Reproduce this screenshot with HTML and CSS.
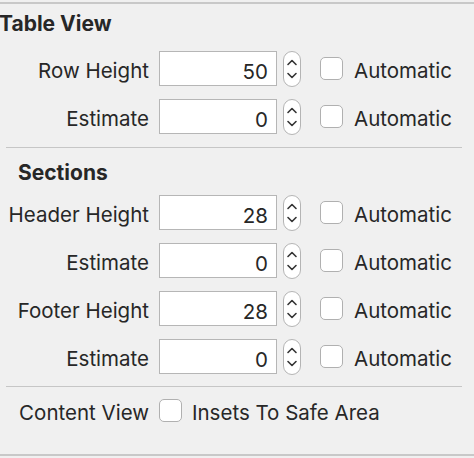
FILE: index.html
```html
<!DOCTYPE html>
<html>
<head>
<meta charset="utf-8">
<link rel="stylesheet" href="styles.css">
</head>
<body>
<div class="panel">
  <div class="title first">Table View</div>
  <div class="grid g1">
    <div class="label">Row Height</div>
    <div class="field">50</div>
    <div class="stepper"><svg width="18" height="36" viewBox="0 0 18 36"><rect x="0.5" y="0.5" width="17" height="35" rx="8.5" fill="#fff" stroke="#b4b4b4"/><path d="M5 13.5 L9 9.5 L13 13.5" fill="none" stroke="#333" stroke-width="1.6" stroke-linecap="round" stroke-linejoin="round"/><path d="M5 22.5 L9 26.5 L13 22.5" fill="none" stroke="#333" stroke-width="1.6" stroke-linecap="round" stroke-linejoin="round"/></svg></div>
    <div class="check"></div>
    <div class="ctext">Automatic</div>

    <div class="label">Estimate</div>
    <div class="field">0</div>
    <div class="stepper"><svg width="18" height="36" viewBox="0 0 18 36"><rect x="0.5" y="0.5" width="17" height="35" rx="8.5" fill="#fff" stroke="#b4b4b4"/><path d="M5 13.5 L9 9.5 L13 13.5" fill="none" stroke="#333" stroke-width="1.6" stroke-linecap="round" stroke-linejoin="round"/><path d="M5 22.5 L9 26.5 L13 22.5" fill="none" stroke="#333" stroke-width="1.6" stroke-linecap="round" stroke-linejoin="round"/></svg></div>
    <div class="check"></div>
    <div class="ctext">Automatic</div>
  </div>
  <div class="sep sep1"></div>
  <div class="title second">Sections</div>
  <div class="grid g2">
    <div class="label">Header Height</div>
    <div class="field">28</div>
    <div class="stepper"><svg width="18" height="36" viewBox="0 0 18 36"><rect x="0.5" y="0.5" width="17" height="35" rx="8.5" fill="#fff" stroke="#b4b4b4"/><path d="M5 13.5 L9 9.5 L13 13.5" fill="none" stroke="#333" stroke-width="1.6" stroke-linecap="round" stroke-linejoin="round"/><path d="M5 22.5 L9 26.5 L13 22.5" fill="none" stroke="#333" stroke-width="1.6" stroke-linecap="round" stroke-linejoin="round"/></svg></div>
    <div class="check"></div>
    <div class="ctext">Automatic</div>

    <div class="label">Estimate</div>
    <div class="field">0</div>
    <div class="stepper"><svg width="18" height="36" viewBox="0 0 18 36"><rect x="0.5" y="0.5" width="17" height="35" rx="8.5" fill="#fff" stroke="#b4b4b4"/><path d="M5 13.5 L9 9.5 L13 13.5" fill="none" stroke="#333" stroke-width="1.6" stroke-linecap="round" stroke-linejoin="round"/><path d="M5 22.5 L9 26.5 L13 22.5" fill="none" stroke="#333" stroke-width="1.6" stroke-linecap="round" stroke-linejoin="round"/></svg></div>
    <div class="check"></div>
    <div class="ctext">Automatic</div>

    <div class="label">Footer Height</div>
    <div class="field">28</div>
    <div class="stepper"><svg width="18" height="36" viewBox="0 0 18 36"><rect x="0.5" y="0.5" width="17" height="35" rx="8.5" fill="#fff" stroke="#b4b4b4"/><path d="M5 13.5 L9 9.5 L13 13.5" fill="none" stroke="#333" stroke-width="1.6" stroke-linecap="round" stroke-linejoin="round"/><path d="M5 22.5 L9 26.5 L13 22.5" fill="none" stroke="#333" stroke-width="1.6" stroke-linecap="round" stroke-linejoin="round"/></svg></div>
    <div class="check"></div>
    <div class="ctext">Automatic</div>

    <div class="label">Estimate</div>
    <div class="field">0</div>
    <div class="stepper"><svg width="18" height="36" viewBox="0 0 18 36"><rect x="0.5" y="0.5" width="17" height="35" rx="8.5" fill="#fff" stroke="#b4b4b4"/><path d="M5 13.5 L9 9.5 L13 13.5" fill="none" stroke="#333" stroke-width="1.6" stroke-linecap="round" stroke-linejoin="round"/><path d="M5 22.5 L9 26.5 L13 22.5" fill="none" stroke="#333" stroke-width="1.6" stroke-linecap="round" stroke-linejoin="round"/></svg></div>
    <div class="check"></div>
    <div class="ctext">Automatic</div>
  </div>
  <div class="sep sep2"></div>
  <div class="content-row">
    <div class="label">Content View</div>
    <div class="check"></div>
    <div class="ctext">Insets To Safe Area</div>
  </div>
</div>
</body>
</html>
```

FILE: styles.css
```css
html, body {
  margin: 0;
  padding: 0;
  background: #f0f0f0;
}
body {
  font-family: Inter, "Liberation Sans", Arial, sans-serif;
  font-size: 20.5px;
  color: #272727;
  width: 474px;
  height: 458px;
  overflow: hidden;
}
.panel {
  margin-top: 2px;
  border-top: 2px solid #c8c8c8;
  border-bottom: 2px solid #c8c8c8;
  height: 454px;
  box-sizing: border-box;
}
.title {
  font-weight: bold;
  height: 25px;
  line-height: 25px;
  font-size: 21px;
}
.title.first {
  margin-top: 7px;
  padding-left: 0;
  margin-left: -1px;
}
.title.second {
  margin-top: 12px;
  padding-left: 18px;
}
.grid {
  display: grid;
  grid-template-columns: 149px 118px 18px 23px auto;
  grid-auto-rows: 35px;
  row-gap: 13px;
  align-items: center;
}
.g1 { margin-top: 15px; }
.g2 { margin-top: 10px; }
.label {
  text-align: right;
  white-space: nowrap;
  line-height: 25px;
  padding-top: 4px;
}
.grid .field { margin-left: 10px; }
.field {
  height: 35px;
  box-sizing: border-box;
  background: #fff;
  border: 1px solid #b6b6b6;
  text-align: right;
  padding-right: 8px;
  line-height: 33px;
  padding-top: 3px;
  width: 118px;
}
.grid .stepper {
  margin-left: 16px;
  height: 36px;
}
.stepper svg { display: block; }
.check {
  width: 23px;
  height: 23px;
  box-sizing: border-box;
  background: #fff;
  border: 1px solid #b0b0b0;
  border-radius: 5px;
}
.grid .check { margin-left: 35px; }
.grid .ctext { margin-left: 46px; }
.ctext {
  white-space: nowrap;
  line-height: 25px;
  padding-top: 3px;
}
.sep {
  height: 1px;
  background: #c6c6c6;
  margin-left: 6px;
  width: 456px;
}
.sep1 { margin-top: 13px; }
.sep2 { margin-top: 12px; }
.content-row {
  display: flex;
  align-items: center;
  margin-top: 12px;
  height: 23px;
}
.content-row .label {
  width: 149px;
  padding-top: 3px;
}
.content-row .check { margin-left: 10px; }
.content-row .ctext { margin-left: 10px; }
```
